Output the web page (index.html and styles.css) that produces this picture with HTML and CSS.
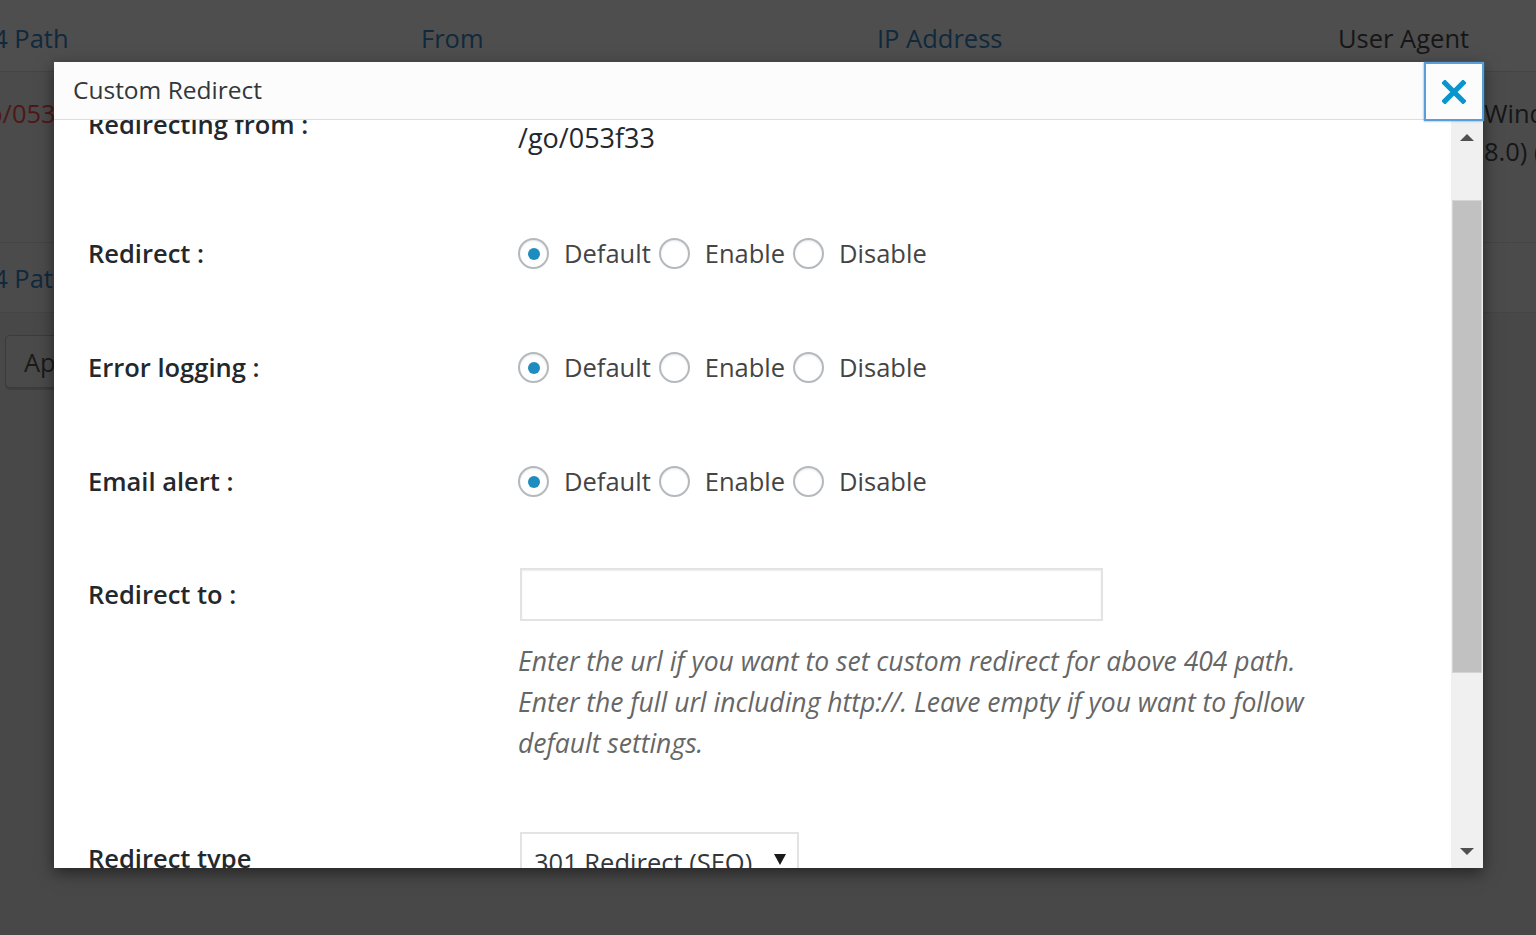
FILE: index.html
```html
<!DOCTYPE html>
<html lang="en">
<head>
  <meta charset="UTF-8">
  <meta name="viewport" content="width=device-width, initial-scale=1.0">
  <title>404 Logs - Custom Redirect</title>
  <link rel="stylesheet" href="styles.css">
</head>
<body>

  <!-- Page behind the modal (dimmed) -->
  <div class="page">
    <div class="log-table">
      <div class="tr thead">
        <div class="th link">404 Path</div>
        <div class="th link">From</div>
        <div class="th link">IP Address</div>
        <div class="th">User Agent</div>
      </div>
      <div class="tr log-row">
        <div class="td red">/go/053f33</div>
        <div class="td">https://example.com/</div>
        <div class="td">127.0.0.1</div>
        <div class="td ua">
          <span class="ua-line">Windows NT 10.0; Win64; x64)</span>
          <span class="ua-line">8.0) (KHTML, like Gecko)</span>
        </div>
      </div>
      <div class="tr tfoot">
        <div class="th link">404 Path</div>
        <div class="th link">From</div>
        <div class="th link">IP Address</div>
        <div class="th">User Agent</div>
      </div>
    </div>
    <div class="bulk-actions">
      <button class="button">Apply</button>
    </div>
  </div>

  <!-- Custom Redirect modal -->
  <div class="modal">
    <div class="modal-header">
      <span class="modal-title">Custom Redirect</span>
      <button class="modal-close" aria-label="Close">
        <svg width="24" height="24" viewBox="0 0 24 24">
          <path d="M3 3 L21 21 M21 3 L3 21" stroke="#0996cf" stroke-width="5.2" stroke-linecap="square"/>
        </svg>
      </button>
    </div>

    <div class="modal-body">
      <div class="modal-content">
        <div class="redirect-form">

          <div class="field field-from">
            <div class="field-label">Redirecting from :</div>
            <div class="field-value from-path">/go/053f33</div>
          </div>

          <div class="field">
            <div class="field-label">Redirect :</div>
            <div class="field-value radios">
              <label class="radio"><input type="radio" name="redirect" checked><span>Default</span></label>
              <label class="radio"><input type="radio" name="redirect"><span>Enable</span></label>
              <label class="radio"><input type="radio" name="redirect"><span>Disable</span></label>
            </div>
          </div>

          <div class="field">
            <div class="field-label">Error logging :</div>
            <div class="field-value radios">
              <label class="radio"><input type="radio" name="logging" checked><span>Default</span></label>
              <label class="radio"><input type="radio" name="logging"><span>Enable</span></label>
              <label class="radio"><input type="radio" name="logging"><span>Disable</span></label>
            </div>
          </div>

          <div class="field">
            <div class="field-label">Email alert :</div>
            <div class="field-value radios">
              <label class="radio"><input type="radio" name="alert" checked><span>Default</span></label>
              <label class="radio"><input type="radio" name="alert"><span>Enable</span></label>
              <label class="radio"><input type="radio" name="alert"><span>Disable</span></label>
            </div>
          </div>

          <div class="field field-top">
            <div class="field-label">Redirect to :</div>
            <div class="field-value">
              <input type="text" class="url-input">
              <p class="description">Enter the url if you want to set custom redirect for above 404 path. Enter the full url including http://. Leave empty if you want to follow default settings.</p>
            </div>
          </div>

          <div class="field field-top field-type">
            <div class="field-label">Redirect type</div>
            <div class="field-value">
              <span class="select-wrap">
                <select class="type-select">
                  <option>301 Redirect (SEO)</option>
                  <option>302 Redirect</option>
                  <option>307 Redirect</option>
                </select>
              </span>
            </div>
          </div>

        </div>
      </div>

      <!-- scrollbar of the modal content -->
      <div class="scrollbar">
        <div class="scroll-btn"><span class="arrow-up"></span></div>
        <div class="scroll-track"><div class="scroll-thumb"></div></div>
        <div class="scroll-btn"><span class="arrow-down"></span></div>
      </div>
    </div>
  </div>

</body>
</html>
```

FILE: styles.css
```css
/* General */
body {
  margin: 0;
  padding: 0;
  background: #484848;
  font-family: "Open Sans", "Noto Sans", sans-serif;
  color: #1e1e1e;
  overflow: hidden;
  height: 935px;
}

/* Dimmed page behind the modal */
.page {
  width: 1536px;
}

.log-table {
  margin-left: -36px;
}

.tr {
  display: grid;
  grid-template-columns: 457px 456px 461px 1fr;
  font-size: 25.5px;
  white-space: nowrap;
  overflow: hidden;
}

.thead {
  height: 72px;
  align-items: center;
  background: #4e4e4e;
  border-bottom: 1px solid #444;
  padding-top: 4px;
  box-sizing: border-box;
}

.log-row {
  height: 171px;
  background: #4b4b4b;
  border-bottom: 1px solid #444;
  box-sizing: border-box;
  padding-top: 22px;
  line-height: 38px;
}

.tfoot {
  height: 70px;
  align-items: center;
  background: #4b4b4b;
  border-bottom: 1px solid #444;
  box-sizing: border-box;
}

.th {
  color: #161616;
}

.th.link {
  color: #10293c;
}

.td {
  color: #161616;
}

.td.red {
  color: #4e1818;
}

.ua {
  display: flex;
  flex-direction: column;
  padding-left: 146px;
}

.bulk-actions {
  padding: 22px 0 0 5px;
}

.button {
  font-family: inherit;
  font-size: 25.5px;
  color: #1a1a1a;
  background: #4a4a4a;
  border: 1px solid #3b3b3b;
  border-radius: 5px;
  height: 53px;
  padding: 0 20px 0 18px;
  box-shadow: 0 2px 0 #3f3f3f;
}

/* Modal */
.modal {
  position: absolute;
  left: 54px;
  top: 62px;
  width: 1429px;
  height: 806px;
  background: #fff;
  display: flex;
  flex-direction: column;
  box-shadow: 0 5px 15px rgba(0, 0, 0, 0.5);
}

.modal-header {
  height: 58px;
  flex-shrink: 0;
  background: #fcfcfc;
  border-bottom: 1px solid #ddd;
  box-sizing: border-box;
  display: flex;
  align-items: center;
  justify-content: space-between;
  position: relative;
  z-index: 1;
}

.modal-title {
  padding-left: 19px;
  padding-bottom: 2px;
  font-size: 24.5px;
  color: #32373c;
}

.modal-close {
  width: 60px;
  height: 59px;
  margin-right: -1px;
  align-self: flex-start;
  background: #fcfcfc;
  border: 2px solid #5b9dd9;
  box-shadow: 0 0 2px rgba(30, 140, 190, 0.8);
  display: flex;
  align-items: center;
  justify-content: center;
  padding: 0;
  cursor: pointer;
}

.modal-body {
  flex: 1;
  display: flex;
  min-height: 0;
}

.modal-content {
  flex: 1;
  overflow: hidden;
}

/* Form rows */
.redirect-form {
  margin-top: -48px;
  padding-left: 34px;
}

.field {
  display: grid;
  grid-template-columns: 430px 1fr;
  align-items: center;
  padding: 36px 0 37px;
  font-size: 25.5px;
  line-height: 41px;
}

.field-label {
  font-weight: 600;
  color: #23282d;
}

.field-value {
  color: #32373c;
}

.field-from {
  align-items: start;
  padding: 32px 0 39px;
}

.from-path {
  padding-top: 13px;
  font-size: 27px;
  color: #23282d;
}

.radios {
  display: flex;
  align-items: center;
  gap: 8px;
}

.radio {
  display: flex;
  align-items: center;
  gap: 15px;
  color: #444;
}

.radio input {
  appearance: none;
  -webkit-appearance: none;
  margin: 0;
  width: 31px;
  height: 31px;
  border: 2px solid #b4b9be;
  border-radius: 50%;
  background: #fff;
  box-shadow: inset 0 1px 2px rgba(0, 0, 0, 0.1);
  display: flex;
  align-items: center;
  justify-content: center;
  box-sizing: border-box;
}

.radio input:checked::before {
  content: "";
  width: 12px;
  height: 12px;
  border-radius: 50%;
  background: #1e8cbe;
}

.field-top {
  align-items: start;
  padding-top: 29px;
}

.field-top .field-label {
  padding-top: 6px;
}

.url-input {
  display: block;
  width: 583px;
  height: 53px;
  margin: 0 0 0 2px;
  border: 2px solid #e3e3e3;
  box-shadow: inset 0 1px 2px rgba(0, 0, 0, 0.07);
  box-sizing: border-box;
  font-family: inherit;
  font-size: 24px;
}

.description {
  margin: 20px 0 0;
  max-width: 830px;
  font-style: italic;
  font-size: 26.5px;
  line-height: 41px;
  color: #666;
}

.field-type {
  padding-top: 31px;
}

.select-wrap {
  position: relative;
  display: inline-block;
  margin-left: 2px;
}

.select-wrap::after {
  content: "";
  position: absolute;
  left: 254px;
  top: 22px;
  border-left: 6px solid transparent;
  border-right: 6px solid transparent;
  border-top: 11px solid #1a1a1a;
  pointer-events: none;
}

.type-select {
  appearance: none;
  -webkit-appearance: none;
  width: 279px;
  height: 53px;
  padding: 6px 0 0 12px;
  border: 2px solid #e3e3e3;
  background: #fff;
  font-family: inherit;
  font-size: 25.5px;
  color: #32373c;
  border-radius: 0;
}

/* Fake scrollbar for the scrolled content */
.scrollbar {
  width: 32px;
  flex-shrink: 0;
  background: #f0f0f0;
  display: flex;
  flex-direction: column;
}

.scroll-btn {
  height: 34px;
  display: flex;
  align-items: center;
  justify-content: center;
}

.arrow-up {
  width: 0;
  height: 0;
  border-left: 7px solid transparent;
  border-right: 7px solid transparent;
  border-bottom: 7px solid #505050;
}

.arrow-down {
  width: 0;
  height: 0;
  border-left: 7px solid transparent;
  border-right: 7px solid transparent;
  border-top: 7px solid #505050;
}

.scroll-track {
  flex: 1;
  padding: 46px 1px 0;
}

.scroll-thumb {
  height: 473px;
  background: #c1c1c1;
  border: 1px solid #d4d4d4;
  box-sizing: border-box;
}
```
